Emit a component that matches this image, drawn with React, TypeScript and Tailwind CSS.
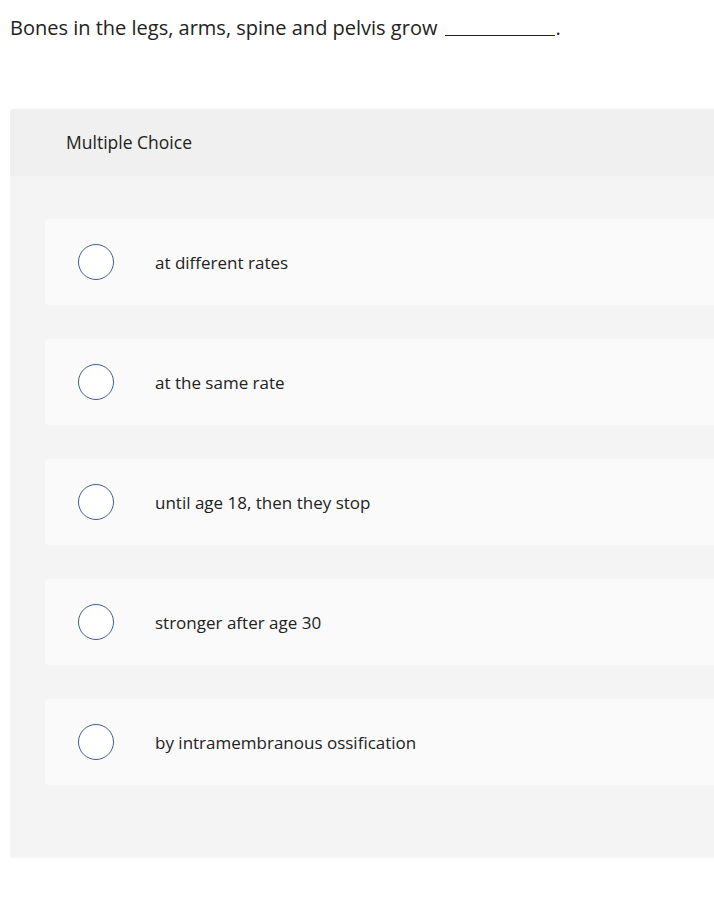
import React from "react";

const options = [
  "at different rates",
  "at the same rate",
  "until age 18, then they stop",
  "stronger after age 30",
  "by intramembranous ossification",
];

export default function App() {
  return (
    <div
      className="w-[714px] h-[912px] overflow-hidden bg-white text-[#222]"
      style={{ fontFamily: "'Open Sans', Lato, sans-serif" }}
    >
      <div className="pl-[10px] pt-[14px] text-[20px] leading-[28px] text-[#222] flex items-end">
        <span>Bones in the legs, arms, spine and pelvis grow</span>
        <span className="ml-[8px] mb-[6px] inline-block w-[110px] border-b border-[#222]" />
        <span>.</span>
      </div>

      <div className="ml-[10px] mt-[67px] w-[760px] rounded-[3px] overflow-hidden">
        <div className="h-[67px] bg-[#f0f0f0] pl-[56px] flex items-center text-[17.5px] text-[#222]">
          Multiple Choice
        </div>
        <div className="bg-[#f4f4f4] pt-[43px] pb-[73px] pl-[35px] flex flex-col gap-[34px]">
          {options.map((o) => (
            <div
              key={o}
              className="h-[86px] bg-[#fafafa] rounded-[3px] flex items-center"
            >
              <div className="ml-[33px] w-[36px] h-[36px] rounded-full border-[1.5px] border-[#3a6193] bg-white shrink-0" />
              <div className="ml-[41px] pt-[2px] text-[17px] text-[#222]">{o}</div>
            </div>
          ))}
        </div>
      </div>
    </div>
  );
}
